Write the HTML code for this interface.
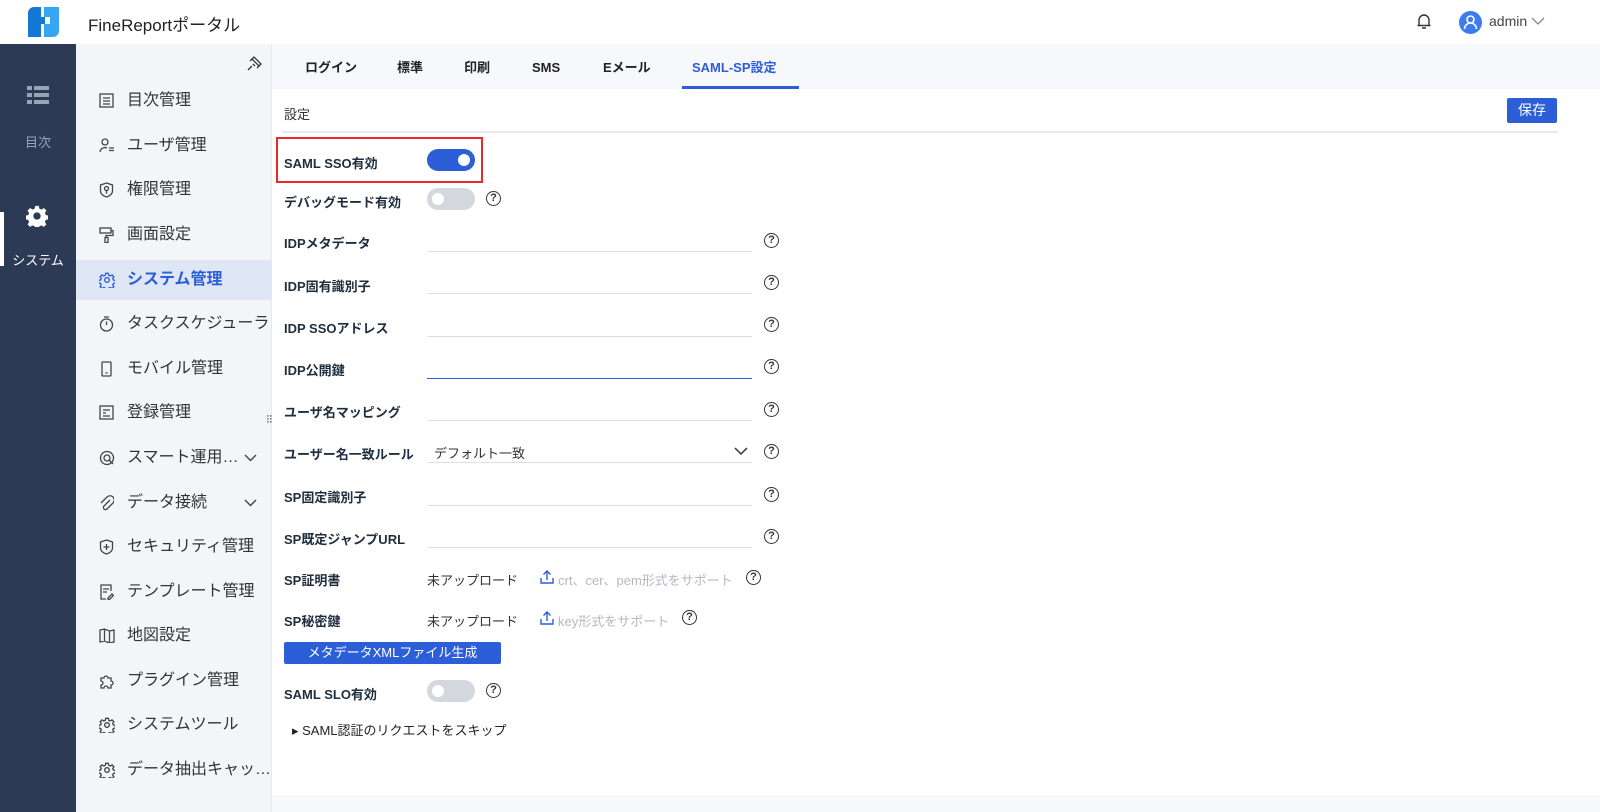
<!DOCTYPE html>
<html><head><meta charset="utf-8"><style>
*{box-sizing:border-box;margin:0;padding:0}
body{width:1600px;height:812px;overflow:hidden;font-family:"Liberation Sans","Noto Sans CJK JP",sans-serif;background:#f7f8fa;position:relative;color:#1f2d3d}
.top{position:absolute;left:0;top:0;width:1600px;height:44px;background:#fff;box-shadow:0 1px 3px rgba(0,0,0,.06)}
.title{position:absolute;left:88px;top:11px;font-size:17px;color:#222}
.nav1{position:absolute;left:0;top:44px;width:76px;height:768px;background:#2c3a55}
.nav1 .lbl{position:absolute;width:76px;text-align:center;font-size:13px}
.nav2{position:absolute;left:76px;top:44px;width:196px;height:768px;background:#f3f5f9;border-right:1px solid #e6e9ef}
.it{position:absolute;left:0;width:195px;height:40px;line-height:40px;padding-left:51px;font-size:16px;color:#333;white-space:nowrap}
.it svg{position:absolute;left:23px;top:12px}
.it.act{background:#dfe6f6;color:#2c5ed8;font-weight:bold}
.main{position:absolute;left:272px;top:44px;width:1328px;height:751px;background:#fff}
.tabs{position:absolute;left:0;top:0;width:1328px;height:45px;background:#f7f8fb}
.tab{position:absolute;top:16px;font-size:13px;line-height:16px;height:16px;font-weight:bold;color:#222}
.row{position:absolute;left:12px;font-size:13px;font-weight:bold;color:#1f2d3d}
.inp{position:absolute;left:155px;width:325px;height:24px;border-bottom:1px solid #dcdfe6}
.q{position:absolute;width:15px;height:15px;border:1.5px solid #333;border-radius:50%;font-size:11px;line-height:12px;text-align:center;font-weight:bold;color:#333}
.sw{position:absolute;left:155px;width:48px;height:22px;border-radius:11px;background:#d4d7dd}
.sw::after{content:"";position:absolute;left:5px;top:5px;width:12px;height:12px;border-radius:50%;background:#fff}
.sw.on{background:#2c5ed8}.sw.on::after{left:31px}
.txt{position:absolute;font-size:13px;color:#333}
</style></head><body>
<div class="top">
<svg style="position:absolute;left:28px;top:6px" width="32" height="32" viewBox="0 0 32 32"><path d="M0 7a6 6 0 0 1 6-6h7v10h4v7h-4v13H0z" fill="#1478d4"/><path d="M16 1h15v24a6 6 0 0 1-6 6h-9V18h6v-7h-6z" fill="#35a6f0"/></svg>
<div class="title">FineReportポータル</div>
<svg style="position:absolute;left:1416px;top:12px" width="16" height="18" viewBox="0 0 16 18" fill="none" stroke="#333" stroke-width="1.4"><path d="M3 13V8a5 5 0 0 1 10 0v5M1.5 13.5h13M6 16h4"/></svg>
<div style="position:absolute;left:1459px;top:11px;width:23px;height:23px;border-radius:50%;background:#3d7bef"><svg width="23" height="23" viewBox="0 0 23 23" fill="none" stroke="#fff" stroke-width="1.6"><circle cx="11.5" cy="8.5" r="3.5"/><path d="M5.5 18a6 6 0 0 1 12 0"/></svg></div>
<div style="position:absolute;left:1489px;top:13px;font-size:14px;color:#444">admin</div>
<svg style="position:absolute;left:1531px;top:17px" width="14" height="9" viewBox="0 0 14 9" fill="none" stroke="#888" stroke-width="1.3"><path d="M1 1l6 6 6-6"/></svg>
</div>
<div class="nav1">
<svg style="position:absolute;left:27px;top:42px" width="22" height="18" viewBox="0 0 22 18" fill="#9aa3b3"><rect x="0" y="0" width="5" height="4"/><rect x="7" y="0" width="15" height="4"/><rect x="0" y="7" width="5" height="4"/><rect x="7" y="7" width="15" height="4"/><rect x="0" y="14" width="5" height="4"/><rect x="7" y="14" width="15" height="4"/></svg>
<div class="lbl" style="top:88px;color:#9aa3b3">目次</div>
<div style="position:absolute;left:0;top:168px;width:4px;height:54px;background:#fff"></div>
<svg style="position:absolute;left:26px;top:161px" width="22" height="22" viewBox="0 0 24 24" fill="#fff"><path d="M10 1h4l.6 3 2.3 1 2.6-1.7 2.8 2.8-1.7 2.6 1 2.3 3 .6v4l-3 .6-1 2.3 1.7 2.6-2.8 2.8-2.6-1.7-2.3 1-.6 3h-4l-.6-3-2.3-1-2.6 1.7-2.8-2.8 1.7-2.6-1-2.3-3-.6v-4l3-.6 1-2.3-1.7-2.6 2.8-2.8 2.6 1.7 2.300-1zM12 8a4 4 0 1 0 0 8 4 4 0 0 0 0-8z"/></svg>
<div class="lbl" style="top:206px;color:#fff">システム</div>
</div>
<div class="nav2">
<svg style="position:absolute;left:170px;top:12px" width="16" height="16" viewBox="0 0 16 16" fill="none" stroke="#333" stroke-width="1.3"><path d="M6 3l7 7M4 5l4-4 7 7-4 4M2 14l4-4M7 8l2 2"/></svg>
<div class="it" style="top:37px"><svg width="15" height="15" viewBox="0 0 15 15" fill="none" stroke="#444" stroke-width="1.3"><rect x="1" y="1" width="13" height="13"/><path d="M4 5h7M4 8h7M4 11h7"/></svg>目次管理</div>
<div class="it" style="top:82px"><svg width="16" height="15" viewBox="0 0 16 15" fill="none" stroke="#444" stroke-width="1.3"><circle cx="6" cy="4" r="3"/><path d="M1 14a5 5 0 0 1 7-4M10 10h5M10 12.5h5"/></svg>ユーザ管理</div>
<div class="it" style="top:126px"><svg width="15" height="16" viewBox="0 0 15 16" fill="none" stroke="#444" stroke-width="1.3"><path d="M7.5 1l6 2v6c0 3-3 5-6 6-3-1-6-3-6-6V3z"/><circle cx="7.5" cy="6.5" r="2"/><path d="M7.5 8.5v3"/></svg>権限管理</div>
<div class="it" style="top:171px"><svg width="15" height="16" viewBox="0 0 15 16" fill="none" stroke="#444" stroke-width="1.3"><rect x="1" y="1" width="11" height="5"/><path d="M12 3.5h2v5H7v2M6 10.5h3v5H6z"/></svg>画面設定</div>
<div class="it act" style="top:216px"><svg width="16" height="16" viewBox="0 0 24 24" fill="none" stroke="#2c5ed8" stroke-width="2"><path d="M10 2h4l.6 3 2.3 1 2.6-1.7 2.8 2.8-1.7 2.6 1 2.3 3 .6v4l-3 .6-1 2.3 1.7 2.6-2.8 2.8-2.6-1.7-2.3 1-.6 3h-4l-.6-3-2.3-1-2.6 1.7-2.8-2.8 1.7-2.6-1-2.3-3-.6v-4l3-.6 1-2.3-1.7-2.6 2.8-2.8 2.6 1.7 2.3-1z"/><circle cx="12" cy="12" r="3.5"/></svg>システム管理</div>
<div class="it" style="top:260px"><svg width="15" height="16" viewBox="0 0 15 16" fill="none" stroke="#444" stroke-width="1.3"><circle cx="7.5" cy="9" r="6"/><path d="M5 1h5M7.5 9V5.5"/></svg>タスクスケジューラ</div>
<div class="it" style="top:305px"><svg width="15" height="16" viewBox="0 0 15 16" fill="none" stroke="#444" stroke-width="1.3"><rect x="3" y="1" width="9" height="14" rx="1"/><path d="M6.5 12h2"/></svg>モバイル管理</div>
<div class="it" style="top:349px"><svg width="15" height="15" viewBox="0 0 15 15" fill="none" stroke="#444" stroke-width="1.3"><rect x="1" y="1" width="13" height="13"/><path d="M4 5h7M4 8h3M4 11h7"/></svg>登録管理</div>
<div class="it" style="top:394px"><svg width="16" height="16" viewBox="0 0 16 16" fill="none" stroke="#444" stroke-width="1.3"><circle cx="8" cy="8" r="6.5"/><circle cx="8" cy="8" r="3"/><path d="M10 10l4 4"/></svg>スマート運用…<svg style="left:168px;top:16px" width="13" height="8" viewBox="0 0 13 8" fill="none" stroke="#444" stroke-width="1.4"><path d="M1 1l5.5 5.5L12 1"/></svg></div>
<div class="it" style="top:439px"><svg width="15" height="16" viewBox="0 0 15 16" fill="none" stroke="#444" stroke-width="1.3"><path d="M11 5l-6 6a2 2 0 0 0 3 3l6-6a4 4 0 0 0-6-6L2 8"/></svg>データ接続<svg style="left:168px;top:16px" width="13" height="8" viewBox="0 0 13 8" fill="none" stroke="#444" stroke-width="1.4"><path d="M1 1l5.5 5.5L12 1"/></svg></div>
<div class="it" style="top:483px"><svg width="15" height="16" viewBox="0 0 15 16" fill="none" stroke="#444" stroke-width="1.3"><path d="M7.5 1l6 2v6c0 3-3 5-6 6-3-1-6-3-6-6V3z"/><path d="M7.5 5v6M4.5 8h6"/></svg>セキュリティ管理</div>
<div class="it" style="top:528px"><svg width="15" height="16" viewBox="0 0 15 16" fill="none" stroke="#444" stroke-width="1.3"><path d="M12 7V1H2v14h5M4 5h6M4 8h4"/><path d="M9 14l4-4 1.5 1.5-4 4H9z"/></svg>テンプレート管理</div>
<div class="it" style="top:572px"><svg width="16" height="15" viewBox="0 0 16 15" fill="none" stroke="#444" stroke-width="1.3"><path d="M1 2l4.5-1 5 2L15 2v12l-4.5 1-5-2L1 14zM5.5 1v12M10.5 3v12"/></svg>地図設定</div>
<div class="it" style="top:617px"><svg width="16" height="16" viewBox="0 0 16 16" fill="none" stroke="#444" stroke-width="1.3"><path d="M2 5h3a2 2 0 1 1 4 0h3v3a2 2 0 1 1 0 4v3H9a2 2 0 1 0-4 0H2v-3a2 2 0 1 0 0-4z"/></svg>プラグイン管理</div>
<div class="it" style="top:661px"><svg width="16" height="16" viewBox="0 0 24 24" fill="none" stroke="#444" stroke-width="2"><path d="M10 2h4l.6 3 2.3 1 2.6-1.7 2.8 2.8-1.7 2.6 1 2.3 3 .6v4l-3 .6-1 2.3 1.7 2.6-2.8 2.8-2.6-1.7-2.3 1-.6 3h-4l-.6-3-2.3-1-2.6 1.7-2.8-2.8 1.7-2.6-1-2.3-3-.6v-4l3-.6 1-2.3-1.7-2.6 2.8-2.8 2.6 1.7 2.3-1z"/><circle cx="12" cy="12" r="3.5"/></svg>システムツール</div>
<div class="it" style="top:706px"><svg width="16" height="16" viewBox="0 0 24 24" fill="none" stroke="#444" stroke-width="2"><path d="M10 2h4l.6 3 2.3 1 2.6-1.7 2.8 2.8-1.7 2.6 1 2.3 3 .6v4l-3 .6-1 2.3 1.7 2.6-2.8 2.8-2.6-1.7-2.3 1-.6 3h-4l-.6-3-2.3-1-2.6 1.7-2.8-2.8 1.7-2.6-1-2.3-3-.6v-4l3-.6 1-2.3-1.7-2.6 2.8-2.8 2.6 1.7 2.3-1z"/><circle cx="12" cy="12" r="3.5"/></svg>データ抽出キャッ…</div>
<div style="position:absolute;left:190px;top:368px;font-size:12px;color:#555;letter-spacing:-1px">⁝⁝</div>
</div>
<div class="main">
<div class="tabs">
<div class="tab" style="left:33px">ログイン</div>
<div class="tab" style="left:125px">標準</div>
<div class="tab" style="left:192px">印刷</div>
<div class="tab" style="left:260px">SMS</div>
<div class="tab" style="left:331px">Eメール</div>
<div class="tab" style="left:420px;color:#2c5ed8">SAML-SP設定</div>
<div style="position:absolute;left:410px;top:42px;width:117px;height:3px;background:#2c5ed8"></div>
</div>
<div class="txt" style="left:12px;top:60px;color:#333">設定</div>
<div style="position:absolute;left:1235px;top:54px;width:50px;height:25px;background:#2c5ed8;border-radius:2px;color:#fff;font-size:14px;text-align:center;line-height:25px">保存</div>
<div style="position:absolute;left:10px;top:87px;width:1276px;height:2px;background:#e8eaee"></div>
<div style="position:absolute;left:4px;top:93px;width:207px;height:46px;border:2px solid #e32b2b"></div>
<div class="row" style="top:109px">SAML SSO有効</div><div class="sw on" style="top:105px"></div>
<div class="row" style="top:148px">デバッグモード有効</div><div class="sw" style="top:144px"></div><div class="q" style="left:214px;top:147px">?</div>
<div class="row" style="top:189px">IDPメタデータ</div><div class="inp" style="top:184px"></div><div class="q" style="left:492px;top:189px">?</div>
<div class="row" style="top:232px">IDP固有識別子</div><div class="inp" style="top:226px"></div><div class="q" style="left:492px;top:231px">?</div>
<div class="row" style="top:274px">IDP SSOアドレス</div><div class="inp" style="top:269px"></div><div class="q" style="left:492px;top:273px">?</div>
<div class="row" style="top:316px">IDP公開鍵</div><div class="inp" style="top:311px;border-bottom:1.5px solid #2c5ed8"></div><div class="q" style="left:492px;top:315px">?</div>
<div class="row" style="top:358px">ユーザ名マッピング</div><div class="inp" style="top:353px"></div><div class="q" style="left:492px;top:358px">?</div>
<div class="row" style="top:400px">ユーザー名一致ルール</div><div class="inp" style="top:395px"></div><div class="txt" style="left:162px;top:399px">デフォルト一致</div><svg style="position:absolute;left:462px;top:403px" width="14" height="9" viewBox="0 0 14 9" fill="none" stroke="#333" stroke-width="1.5"><path d="M1 1l6 6 6-6"/></svg><div class="q" style="left:492px;top:400px">?</div>
<div class="row" style="top:443px">SP固定識別子</div><div class="inp" style="top:438px"></div><div class="q" style="left:492px;top:443px">?</div>
<div class="row" style="top:485px">SP既定ジャンプURL</div><div class="inp" style="top:480px"></div><div class="q" style="left:492px;top:485px">?</div>
<div class="row" style="top:526px">SP証明書</div><div class="txt" style="left:155px;top:526px">未アップロード</div>
<svg style="position:absolute;left:268px;top:526px" width="14" height="14" viewBox="0 0 14 14" fill="none" stroke="#2c5ed8" stroke-width="1.4"><path d="M1 8v5h12V8M7 10V1M3.5 4.5L7 1l3.5 3.5"/></svg>
<div class="txt" style="left:286px;top:526px;color:#b4b9c2">crt、cer、pem形式をサポート</div><div class="q" style="left:474px;top:526px">?</div>
<div class="row" style="top:567px">SP秘密鍵</div><div class="txt" style="left:155px;top:567px">未アップロード</div>
<svg style="position:absolute;left:268px;top:567px" width="14" height="14" viewBox="0 0 14 14" fill="none" stroke="#2c5ed8" stroke-width="1.4"><path d="M1 8v5h12V8M7 10V1M3.5 4.5L7 1l3.5 3.5"/></svg>
<div class="txt" style="left:286px;top:567px;color:#b4b9c2">key形式をサポート</div><div class="q" style="left:410px;top:566px">?</div>
<div style="position:absolute;left:12px;top:598px;width:217px;height:22px;background:#2c5ed8;border-radius:2px;color:#fff;font-size:13px;text-align:center;line-height:22px">メタデータXMLファイル生成</div>
<div class="row" style="top:640px">SAML SLO有効</div><div class="sw" style="top:636px"></div><div class="q" style="left:214px;top:639px">?</div>
<div class="txt" style="left:20px;top:676px;color:#222">▸ SAML認証のリクエストをスキップ</div>
</div>
</body></html>
